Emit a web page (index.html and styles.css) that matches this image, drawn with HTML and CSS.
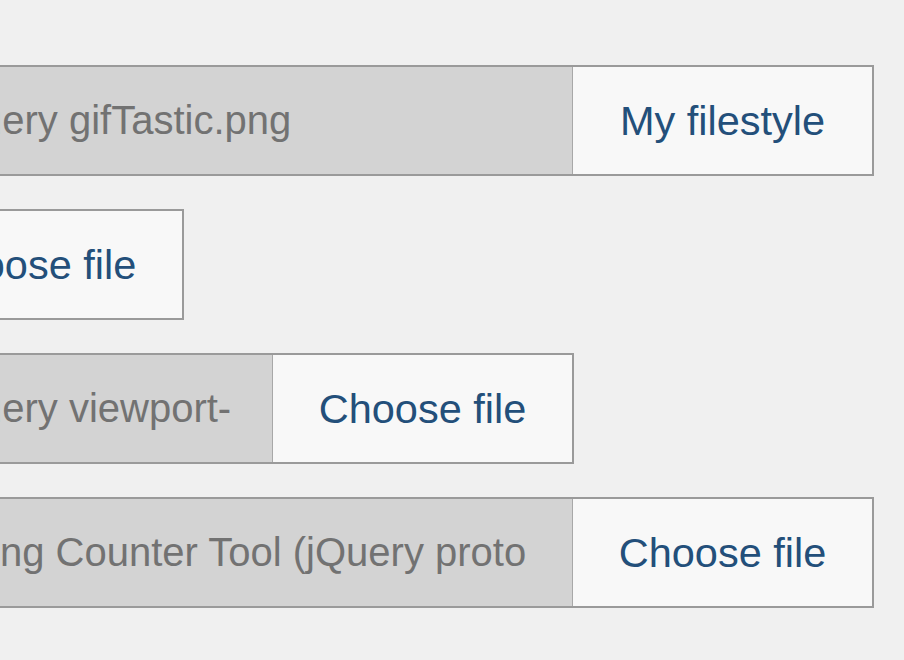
FILE: index.html
```html
<!DOCTYPE html>
<html lang="en">
<head>
    <meta charset="UTF-8">
    <meta name="viewport" content="width=device-width, initial-scale=1.0">
    <title>Filestyle</title>
    <link rel="stylesheet" href="styles.css">
</head>
<body>
    <div class="container">
        <!-- Input with custom button text -->
        <div class="filestyle">
            <div class="file-name"><span>jQuery gifTastic.png</span></div>
            <label class="file-button">My filestyle</label>
        </div>

        <!-- Button only -->
        <div class="filestyle">
            <label class="file-button">Choose file</label>
        </div>

        <!-- Small input -->
        <div class="filestyle">
            <div class="file-name narrow"><span>jQuery viewport-</span></div>
            <label class="file-button">Choose file</label>
        </div>

        <!-- Long file name -->
        <div class="filestyle">
            <div class="file-name"><span>String Counter Tool (jQuery prototype).png</span></div>
            <label class="file-button">Choose file</label>
        </div>
    </div>
</body>
</html>
```

FILE: styles.css
```css
* {
    margin: 0;
    padding: 0;
    box-sizing: border-box;
}

html, body {
    width: 904px;
    height: 660px;
    overflow: hidden;
}

body {
    font-family: 'Liberation Sans', Arial, sans-serif;
    background: #f0f0f0;
}

.container {
    display: flex;
    flex-direction: column;
    align-items: flex-start;
    gap: 33px;
    margin-left: -119px;
    padding-top: 65px;
}

.filestyle {
    display: flex;
    height: 111px;
    border: 2px solid #9a9a9a;
    font-size: 41.5px;
}

.file-name {
    width: 690px;
    padding: 0 46px 0 57px;
    display: flex;
    align-items: center;
    background: #d3d3d3;
    color: #727272;
    font-size: 40px;
    border-right: 1px solid #a8a8a8;
}

.file-name span {
    white-space: nowrap;
    overflow: hidden;
    min-width: 0;
}

.file-name.narrow {
    width: 390px;
    padding-right: 36px;
}

.file-button {
    width: 299px;
    display: flex;
    align-items: center;
    justify-content: center;
    background: #f8f8f8;
    color: #234f7a;
    white-space: nowrap;
}
```
